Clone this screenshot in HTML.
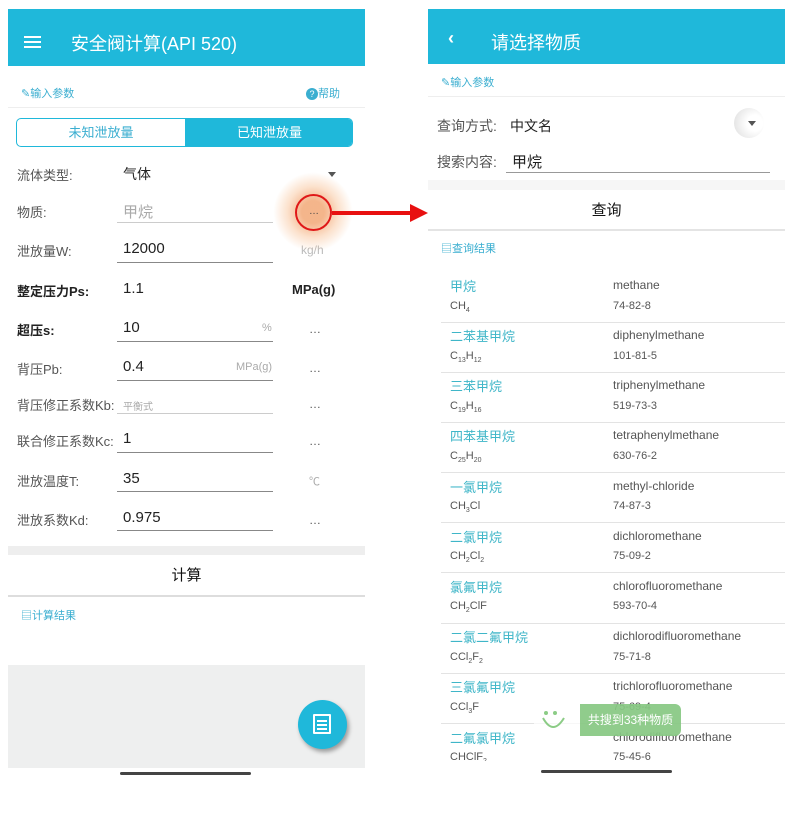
<!DOCTYPE html>
<html><head><meta charset="utf-8"><style>
*{margin:0;padding:0;box-sizing:border-box}
body{width:796px;height:827px;background:#fff;position:relative;overflow:hidden;font-family:"Liberation Sans","Noto Sans CJK SC",sans-serif;color:#333}
.a{position:absolute;white-space:nowrap}
.bar{background:#1fb8da}
.lab{font-size:13px;color:#555;left:17px}
.val{font-size:15px;color:#222;left:123px}
.ul{height:1px;background:#888;left:117px;width:156px}
.dots{left:309px;font-size:12px;color:#555}
.cn{color:#3fb6c8;font-size:13px;left:450px}
.en{font-size:12px;color:#555;left:613px}
.fm{font-size:11px;color:#555;left:450px}
.sep{left:441px;width:344px;height:1px;background:#e3e3e3}
sub{font-size:7px}
.tc{color:#3aaed0;font-size:11px}
</style></head><body>
<!-- LEFT -->
<div class="a bar" style="left:8px;top:9px;width:357px;height:57px"></div>
<div class="a" style="left:24px;top:36px;width:17px;height:2px;background:#fff;box-shadow:0 5px 0 #fff,0 10px 0 #fff"></div>
<div class="a" style="left:71px;top:30px;color:#fff;font-size:18px">安全阀计算(API 520)</div>
<div class="a tc" style="left:21px;top:85px">✎输入参数</div>
<div class="a tc" style="left:306px;top:85px"><span style="display:inline-block;width:12px;height:12px;border-radius:50%;background:#3aaed0;color:#fff;font-size:9px;text-align:center;line-height:12px">?</span>帮助</div>
<div class="a" style="left:8px;top:107px;width:357px;height:1px;background:#eee"></div>
<div class="a" style="left:16px;top:118px;width:337px;height:29px;border:1px solid #1fb8da;border-radius:5px;overflow:hidden">
<div class="a" style="left:0;top:0;width:168px;height:27px;color:#3aaed0;font-size:13px;text-align:center;line-height:27px">未知泄放量</div>
<div class="a" style="left:168px;top:0;width:169px;height:27px;background:#1fb8da;color:#fff;font-size:13px;text-align:center;line-height:27px">已知泄放量</div></div>
<div class="a lab" style="top:165px">流体类型:</div><div class="a val" style="top:164px;font-size:14px">气体</div>
<div class="a" style="left:328px;top:172px;border:4px solid transparent;border-top:5px solid #555"></div>
<div class="a lab" style="top:202px">物质:</div><div class="a val" style="top:201px;color:#aaa">甲烷</div><div class="a ul" style="top:222px;background:#ccc"></div>
<div class="a lab" style="top:241px">泄放量W:</div><div class="a val" style="top:240px">12000</div><div class="a ul" style="top:262px"></div>
<div class="a" style="left:301px;top:243px;font-size:12px;color:#bbb">kg/h</div>
<div class="a lab" style="top:281px;color:#222;font-weight:bold">整定压力Ps:</div><div class="a val" style="top:280px">1.1</div>
<div class="a" style="left:292px;top:282px;font-size:13px;color:#222;font-weight:bold">MPa(g)</div>
<div class="a lab" style="top:320px;color:#222;font-weight:bold">超压s:</div><div class="a val" style="top:319px">10</div><div class="a ul" style="top:341px"></div>
<div class="a" style="left:262px;top:322px;font-size:11px;color:#aaa">%</div><div class="a dots" style="top:322px">…</div>
<div class="a lab" style="top:359px">背压Pb:</div><div class="a val" style="top:358px">0.4</div><div class="a ul" style="top:380px"></div>
<div class="a" style="left:236px;top:361px;font-size:11px;color:#aaa">MPa(g)</div><div class="a dots" style="top:361px">…</div>
<div class="a lab" style="top:395px">背压修正系数Kb:</div><div class="a" style="left:123px;top:398px;font-size:10px;color:#aaa">平衡式</div><div class="a ul" style="top:413px;background:#ccc"></div><div class="a dots" style="top:397px">…</div>
<div class="a lab" style="top:431px">联合修正系数Kc:</div><div class="a val" style="top:430px">1</div><div class="a ul" style="top:452px"></div><div class="a dots" style="top:434px">…</div>
<div class="a lab" style="top:471px">泄放温度T:</div><div class="a val" style="top:470px">35</div><div class="a ul" style="top:491px"></div>
<div class="a" style="left:309px;top:473px;font-size:11px;color:#aaa">℃</div>
<div class="a lab" style="top:510px">泄放系数Kd:</div><div class="a val" style="top:509px">0.975</div><div class="a ul" style="top:530px"></div><div class="a dots" style="top:513px">…</div>
<div class="a" style="left:8px;top:546px;width:357px;height:9px;background:#eee"></div>
<div class="a" style="left:8px;top:555px;width:357px;height:42px;text-align:center;line-height:42px;font-size:15px;color:#111;border-bottom:2px solid #ddd">计算</div>
<div class="a tc" style="left:21px;top:607px">▤计算结果</div>
<div class="a" style="left:8px;top:665px;width:357px;height:103px;background:#eeefef"></div>
<div class="a" style="left:298px;top:700px;width:49px;height:49px;border-radius:50%;background:#1fb8da;box-shadow:2px 3px 4px rgba(0,0,0,.35)"></div>
<div class="a" style="left:313px;top:714px;width:18px;height:20px;border:2px solid #fff;border-radius:1px"></div>
<div class="a" style="left:317px;top:720px;width:10px;height:2px;background:#fff;box-shadow:0 4px 0 #fff,0 8px 0 #fff"></div>
<div class="a" style="left:120px;top:772px;width:131px;height:3px;border-radius:2px;background:#444"></div>
<!-- glow + arrow -->
<div class="a" style="left:273px;top:172px;width:80px;height:80px;border-radius:50%;background:radial-gradient(circle,rgba(240,150,90,.7) 20%,rgba(245,170,110,.35) 45%,rgba(255,255,255,0) 70%)"></div>
<div class="a" style="left:295px;top:194px;width:37px;height:37px;border-radius:50%;border:2px solid #e01818"></div>
<div class="a" style="left:309px;top:206px;font-size:10px;color:#444">…</div>
<div class="a" style="left:332px;top:211px;width:82px;height:4px;background:#e81010"></div>
<div class="a" style="left:410px;top:204px;border:9px solid transparent;border-left:18px solid #e81010;border-right:0"></div>
<!-- RIGHT -->
<div class="a bar" style="left:428px;top:9px;width:357px;height:55px"></div>
<div class="a" style="left:448px;top:28px;color:#fff;font-size:18px;font-weight:bold">‹</div>
<div class="a" style="left:491px;top:29px;color:#fff;font-size:18px">请选择物质</div>
<div class="a tc" style="left:441px;top:74px">✎输入参数</div>
<div class="a" style="left:428px;top:96px;width:357px;height:1px;background:#eee"></div>
<div class="a" style="left:437px;top:116px;font-size:14px;color:#555">查询方式:</div>
<div class="a" style="left:510px;top:116px;font-size:14px;color:#222">中文名</div>
<div class="a" style="left:734px;top:108px;width:30px;height:30px;border-radius:50%;background:radial-gradient(circle at 70% 50%,#fff 30%,#e6e6e6 80%)"></div>
<div class="a" style="left:748px;top:121px;border:4px solid transparent;border-top:5px solid #555"></div>
<div class="a" style="left:437px;top:152px;font-size:14px;color:#555">搜索内容:</div>
<div class="a" style="left:512px;top:151px;font-size:15px;color:#222">甲烷</div>
<div class="a" style="left:506px;top:172px;width:264px;height:1px;background:#999"></div>
<div class="a" style="left:428px;top:180px;width:357px;height:10px;background:#f6f6f6"></div>
<div class="a" style="left:428px;top:190px;width:357px;height:41px;text-align:center;line-height:41px;font-size:15px;color:#111;border-bottom:2px solid #e4e4e4">查询</div>
<div class="a tc" style="left:441px;top:240px">▤查询结果</div>
<div class="a" style="left:428px;top:270px;width:357px;height:491px;overflow:hidden">
<div style="position:relative;left:-428px;top:-270px">
<div class="a cn" style="top:276px">甲烷</div><div class="a en" style="top:278px">methane</div><div class="a fm" style="top:300px">CH<sub>4</sub></div><div class="a en" style="top:300px;font-size:11px">74-82-8</div>
<div class="a sep" style="top:322px"></div>
<div class="a cn" style="top:326px">二苯基甲烷</div><div class="a en" style="top:328px">diphenylmethane</div><div class="a fm" style="top:350px">C<sub>13</sub>H<sub>12</sub></div><div class="a en" style="top:350px;font-size:11px">101-81-5</div>
<div class="a sep" style="top:372px"></div>
<div class="a cn" style="top:376px">三苯甲烷</div><div class="a en" style="top:378px">triphenylmethane</div><div class="a fm" style="top:400px">C<sub>19</sub>H<sub>16</sub></div><div class="a en" style="top:400px;font-size:11px">519-73-3</div>
<div class="a sep" style="top:422px"></div>
<div class="a cn" style="top:426px">四苯基甲烷</div><div class="a en" style="top:428px">tetraphenylmethane</div><div class="a fm" style="top:450px">C<sub>25</sub>H<sub>20</sub></div><div class="a en" style="top:450px;font-size:11px">630-76-2</div>
<div class="a sep" style="top:472px"></div>
<div class="a cn" style="top:477px">一氯甲烷</div><div class="a en" style="top:479px">methyl-chloride</div><div class="a fm" style="top:500px">CH<sub>3</sub>Cl</div><div class="a en" style="top:500px;font-size:11px">74-87-3</div>
<div class="a sep" style="top:522px"></div>
<div class="a cn" style="top:527px">二氯甲烷</div><div class="a en" style="top:529px">dichloromethane</div><div class="a fm" style="top:550px">CH<sub>2</sub>Cl<sub>2</sub></div><div class="a en" style="top:550px;font-size:11px">75-09-2</div>
<div class="a sep" style="top:572px"></div>
<div class="a cn" style="top:577px">氯氟甲烷</div><div class="a en" style="top:579px">chlorofluoromethane</div><div class="a fm" style="top:600px">CH<sub>2</sub>ClF</div><div class="a en" style="top:600px;font-size:11px">593-70-4</div>
<div class="a sep" style="top:623px"></div>
<div class="a cn" style="top:627px">二氯二氟甲烷</div><div class="a en" style="top:629px">dichlorodifluoromethane</div><div class="a fm" style="top:651px">CCl<sub>2</sub>F<sub>2</sub></div><div class="a en" style="top:651px;font-size:11px">75-71-8</div>
<div class="a sep" style="top:673px"></div>
<div class="a cn" style="top:677px">三氯氟甲烷</div><div class="a en" style="top:679px">trichlorofluoromethane</div><div class="a fm" style="top:701px">CCl<sub>3</sub>F</div><div class="a en" style="top:701px;font-size:11px">75-69-4</div>
<div class="a sep" style="top:723px"></div>
<div class="a cn" style="top:728px">二氟氯甲烷</div><div class="a en" style="top:730px">chlorodifluoromethane</div><div class="a fm" style="top:751px">CHClF<sub>2</sub></div><div class="a en" style="top:751px;font-size:11px">75-45-6</div>
</div></div>
<!-- toast -->
<div class="a" style="left:534px;top:704px;width:46px;height:32px;background:rgba(255,255,255,.7)"></div>
<svg class="a" style="left:540px;top:708px" width="30" height="28"><circle cx="6" cy="5" r="2" fill="#8ccc86"/><circle cx="15" cy="5" r="2" fill="#8ccc86"/><path d="M3 10 Q13 28 24 10" stroke="#8ccc86" stroke-width="2" fill="none"/></svg>
<div class="a" style="left:580px;top:704px;width:101px;height:32px;background:rgba(135,200,130,.92);border-radius:0 6px 6px 0;color:#fff;font-size:12px;line-height:32px;text-align:center">共搜到33种物质</div>
<div class="a" style="left:541px;top:770px;width:131px;height:3px;border-radius:2px;background:#444"></div>
</body></html>
